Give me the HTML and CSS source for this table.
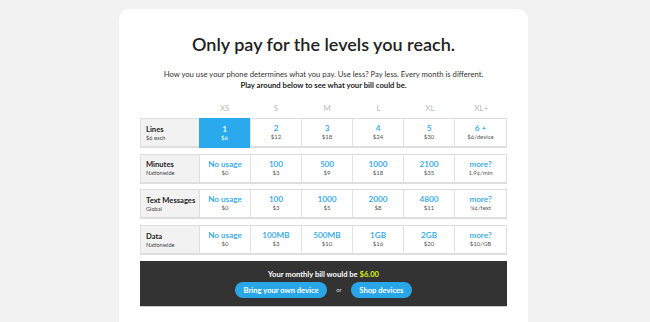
FILE: index.html
```html
<!DOCTYPE html>
<html>
<head>
<meta charset="utf-8">
<link rel="stylesheet" href="styles.css">
</head>
<body>
<div class="card">
  <h1 class="title">Only pay for the levels you reach.</h1>
  <p class="intro">How you use your phone determines what you pay. Use less? Pay less. Every month is different.<br><b>Play around below to see what your bill could be.</b></p>
  <div class="table">
    <div class="sizes">
      <span></span><span>XS</span><span>S</span><span>M</span><span>L</span><span>XL</span><span>XL+</span>
    </div>
    <div class="row">
      <div class="label"><b>Lines</b><small>$6 each</small></div>
      <div class="cell selected"><b>1</b><small>$6</small></div>
      <div class="cell"><b>2</b><small>$12</small></div>
      <div class="cell"><b>3</b><small>$18</small></div>
      <div class="cell"><b>4</b><small>$24</small></div>
      <div class="cell"><b>5</b><small>$30</small></div>
      <div class="cell"><b>6 +</b><small>$6/device</small></div>
    </div>
    <div class="row">
      <div class="label"><b>Minutes</b><small>Nationwide</small></div>
      <div class="cell"><b>No usage</b><small>$0</small></div>
      <div class="cell"><b>100</b><small>$3</small></div>
      <div class="cell"><b>500</b><small>$9</small></div>
      <div class="cell"><b>1000</b><small>$18</small></div>
      <div class="cell"><b>2100</b><small>$35</small></div>
      <div class="cell"><b>more?</b><small>1.9¢/min</small></div>
    </div>
    <div class="row">
      <div class="label"><b>Text Messages</b><small>Global</small></div>
      <div class="cell"><b>No usage</b><small>$0</small></div>
      <div class="cell"><b>100</b><small>$3</small></div>
      <div class="cell"><b>1000</b><small>$5</small></div>
      <div class="cell"><b>2000</b><small>$8</small></div>
      <div class="cell"><b>4800</b><small>$11</small></div>
      <div class="cell"><b>more?</b><small>¼¢/text</small></div>
    </div>
    <div class="row">
      <div class="label"><b>Data</b><small>Nationwide</small></div>
      <div class="cell"><b>No usage</b><small>$0</small></div>
      <div class="cell"><b>100MB</b><small>$3</small></div>
      <div class="cell"><b>500MB</b><small>$10</small></div>
      <div class="cell"><b>1GB</b><small>$16</small></div>
      <div class="cell"><b>2GB</b><small>$20</small></div>
      <div class="cell"><b>more?</b><small>$10/GB</small></div>
    </div>
    <div class="bill">
      <div class="total">Your monthly bill would be <span class="amount">$6.00</span></div>
      <div class="actions">
        <a class="btn">Bring your own device</a>
        <span class="or">or</span>
        <a class="btn">Shop devices</a>
      </div>
    </div>
  </div>
</div>
</body>
</html>
```
FILE: styles.css
```css
* { box-sizing: border-box; }
html, body { margin: 0; padding: 0; }
body {
  background: #f2f2f2;
  font-family: "Lato", "Open Sans", sans-serif;
  color: #222;
  overflow: hidden;
}
.card {
  margin: 9px 0 0 119px;
  width: 409px;
  height: 313px;
  background: #fff;
  border-radius: 10px 10px 0 0;
  padding: 23px 21px 0;
}
.title {
  margin: 0;
  text-align: center;
  font-size: 18px;
  font-weight: 600;
  line-height: 24px;
  color: #222;
}
.intro {
  margin: 12.5px 0 0;
  text-align: center;
  font-size: 7.7px;
  line-height: 11px;
  color: #333;
}
.intro b { font-weight: 700; color: #222; }
.table { margin-top: 6.5px; }
.sizes {
  display: grid;
  grid-template-columns: 59px repeat(6, 1fr);
  height: 21px;
  align-items: center;
  font-size: 8px;
  color: #bbb;
  text-align: center;
}
.row {
  display: grid;
  grid-template-columns: 59px repeat(6, 1fr);
  height: 30px;
  border: 1px solid #dedede;
  border-bottom-width: 2px;
  margin-bottom: 5.7px;
}
.label {
  background: #f2f2f2;
  padding: 0 5px;
  display: flex;
  flex-direction: column;
  justify-content: center;
  border-right: 1px solid #dedede;
}
.label b { font-size: 7.6px; font-weight: 700; line-height: 9px; color: #222; white-space: nowrap; }
.label small { font-size: 5.6px; line-height: 7px; color: #444; }
.cell {
  display: flex;
  flex-direction: column;
  justify-content: center;
  align-items: center;
  border-right: 1px solid #e2e2e2;
  text-align: center;
}
.cell:last-child { border-right: 0; }
.cell b { font-size: 8.2px; font-weight: 600; color: #2aa6e8; line-height: 9px; }
.cell small { font-size: 6px; color: #555; line-height: 8px; }
.cell.selected { background: #2aa9ec; margin: -1px 0 -2px -1px; }
.cell.selected b, .cell.selected small { color: #fff; }
.bill {
  background: #333;
  height: 46px;
  border-bottom: 1px solid #ccc;
  display: flex;
  flex-direction: column;
  align-items: center;
  padding-top: 7px;
  color: #fff;
}
.total { font-size: 7.6px; font-weight: 700; line-height: 12px; }
.amount { color: #d9f20a; }
.actions {
  margin-top: 2px;
  display: flex;
  align-items: center;
  gap: 9px;
}
.btn {
  background: #29a6e8;
  color: #fff;
  font-size: 7.6px;
  font-weight: 700;
  height: 16px;
  line-height: 16px;
  padding: 0 8.5px;
  border-radius: 8px;
}
.or { font-size: 6px; color: #ddd; }
```
